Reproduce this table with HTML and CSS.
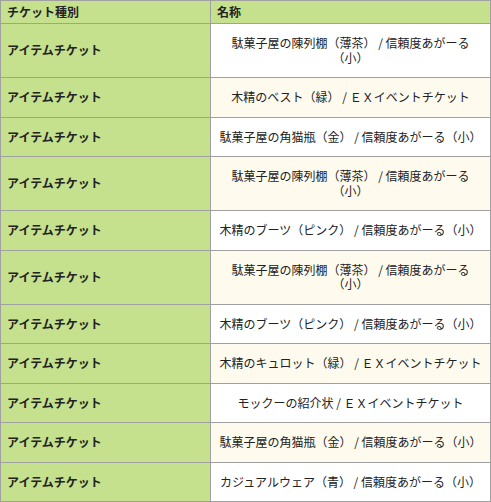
FILE: index.html
```html
<!DOCTYPE html>
<html lang="ja">
<head>
<meta charset="utf-8">
<link rel="stylesheet" href="styles.css">
</head>
<body>
<table class="tickets">
  <colgroup><col class="col-kind"><col class="col-name"></colgroup>
  <thead>
    <tr><th>チケット種別</th><th>名称</th></tr>
  </thead>
  <tbody>
    <tr><td class="kind">アイテムチケット</td><td class="name">駄菓子屋の陳列棚（薄茶） / 信頼度あがーる（小）</td></tr>
    <tr class="alt"><td class="kind">アイテムチケット</td><td class="name">木精のベスト（緑） / ＥＸイベントチケット</td></tr>
    <tr><td class="kind">アイテムチケット</td><td class="name">駄菓子屋の角猫瓶（金） / 信頼度あがーる（小）</td></tr>
    <tr class="alt"><td class="kind">アイテムチケット</td><td class="name">駄菓子屋の陳列棚（薄茶） / 信頼度あがーる（小）</td></tr>
    <tr><td class="kind">アイテムチケット</td><td class="name">木精のブーツ（ピンク） / 信頼度あがーる（小）</td></tr>
    <tr class="alt"><td class="kind">アイテムチケット</td><td class="name">駄菓子屋の陳列棚（薄茶） / 信頼度あがーる（小）</td></tr>
    <tr><td class="kind">アイテムチケット</td><td class="name">木精のブーツ（ピンク） / 信頼度あがーる（小）</td></tr>
    <tr class="alt"><td class="kind">アイテムチケット</td><td class="name">木精のキュロット（緑） / ＥＸイベントチケット</td></tr>
    <tr><td class="kind">アイテムチケット</td><td class="name">モックーの紹介状 / ＥＸイベントチケット</td></tr>
    <tr class="alt"><td class="kind">アイテムチケット</td><td class="name">駄菓子屋の角猫瓶（金） / 信頼度あがーる（小）</td></tr>
    <tr><td class="kind">アイテムチケット</td><td class="name">カジュアルウェア（青） / 信頼度あがーる（小）</td></tr>
  </tbody>
</table>
</body>
</html>
```
FILE: styles.css
```css
html, body {
  margin: 0;
  padding: 0;
  background: #ffffff;
}
body {
  font-family: "Noto Sans CJK JP", "Noto Sans", sans-serif;
  font-size: 12px;
  color: #222222;
}
.tickets {
  width: 491px;
  border-collapse: collapse;
  table-layout: fixed;
}
.col-kind { width: 210px; }
.tickets th,
.tickets td {
  border: 1px solid #a0a0a0;
  line-height: 14.5px;
}
.tickets th {
  background: #c5e18e;
  text-align: left;
  font-weight: bold;
  padding: 4px 6px 3.5px;
}
.tickets td {
  padding: 12px 6px;
  vertical-align: middle;
}
.tickets td.kind {
  background: #c5e18e;
  font-weight: bold;
}
.tickets td.name {
  background: #ffffff;
  text-align: center;
}
.tickets tr.alt td.name {
  background: #fefbee;
}
```
